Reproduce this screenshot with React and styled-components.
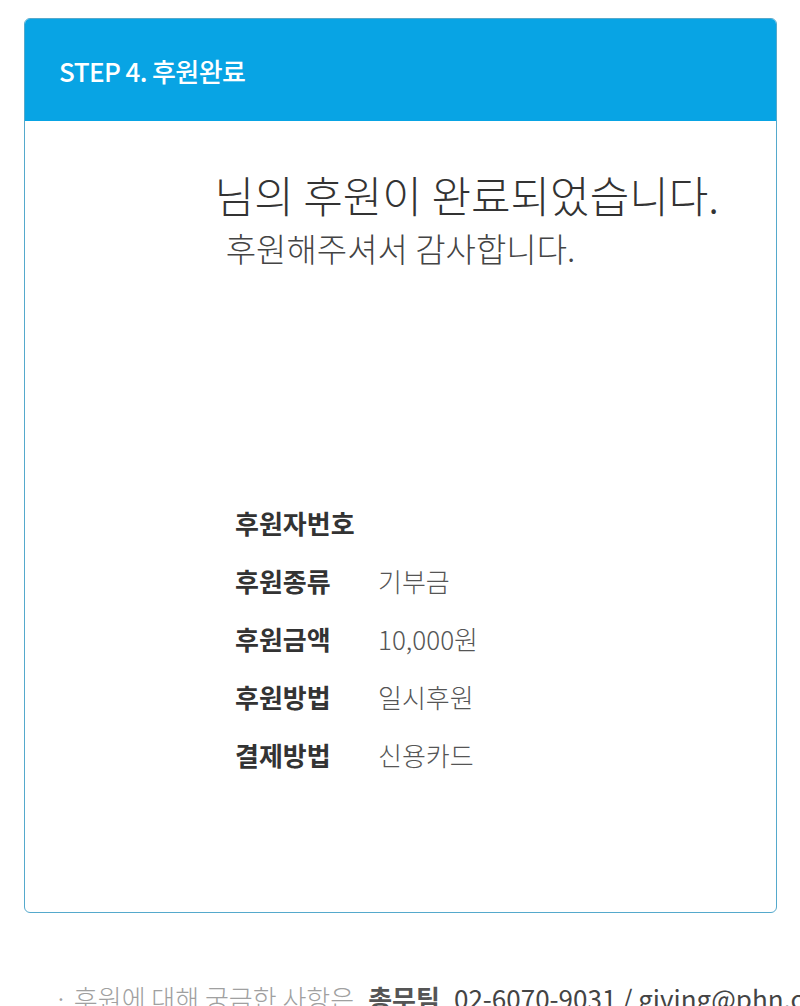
import styled, { createGlobalStyle } from 'styled-components'

const GlobalStyle = createGlobalStyle`
  html, body {
    margin: 0;
    padding: 0;
    background: #fff;
    font-family: "Noto Sans CJK KR", "Noto Sans", sans-serif;
  }
`

const Page = styled.div`
  width: 800px;
  height: 1006px;
  overflow: hidden;
  padding: 18px 23px 0 24px;
  box-sizing: border-box;
`

const Card = styled.section`
  height: 895px;
  box-sizing: border-box;
  border: 1.5px solid #55a9cc;
  border-radius: 6px;
  overflow: hidden;
  display: flex;
  flex-direction: column;
`

const CardHeader = styled.header`
  height: 102px;
  flex-shrink: 0;
  background: #08a4e4;
  display: flex;
  align-items: center;
  padding: 0 34px;
`

const Title = styled.h2`
  margin: 0;
  color: #fff;
  font-size: 26px;
  font-weight: 500;
  letter-spacing: -0.6px;
`

const Message = styled.div`
  padding-top: 45px;
  text-align: center;
  color: #333;
`

const MainLine = styled.p`
  margin: 0;
  font-size: 43px;
  line-height: 56px;
  font-weight: 300;
`

const Masked = styled.span`
  color: #fff;
  padding-right: 14px;
`

const SubLine = styled.p`
  margin: 4px 0 0;
  font-size: 33px;
  line-height: 44px;
  font-weight: 300;
  color: #444;
`

const InfoList = styled.dl`
  margin: 234px 0 0;
  padding-left: 210px;
  display: flex;
  flex-direction: column;
  gap: 22px;
`

const InfoRow = styled.div`
  display: flex;
  align-items: center;
  height: 36px;
`

const Label = styled.dt`
  width: 143px;
  font-size: 26px;
  font-weight: 700;
  color: #333;
`

const Value = styled.dd`
  margin: 0;
  font-size: 26px;
  font-weight: 300;
  color: #555;
`

const Footer = styled.p`
  margin: 68px 0 0 30px;
  white-space: nowrap;
  font-size: 26px;
  line-height: 34px;
  font-weight: 300;
  color: #a0a0a0;
`

const Strong = styled.b`
  color: #555;
  font-weight: 700;
  margin: 0 14px;
`

const Contact = styled.span`
  color: #444;
  font-weight: 400;
`

const rows = [
  { label: '후원자번호', value: '' },
  { label: '후원종류', value: '기부금' },
  { label: '후원금액', value: '10,000원' },
  { label: '후원방법', value: '일시후원' },
  { label: '결제방법', value: '신용카드' },
]

const App = () => {
  return (
    <>
      <GlobalStyle />
      <Page>
        <Card>
          <CardHeader>
            <Title>STEP 4. 후원완료</Title>
          </CardHeader>
          <Message>
            <MainLine>
              <Masked>홍길동</Masked>님의 후원이 완료되었습니다.
            </MainLine>
            <SubLine>후원해주셔서 감사합니다.</SubLine>
          </Message>
          <InfoList>
            {rows.map((row) => (
              <InfoRow key={row.label}>
                <Label>{row.label}</Label>
                <Value>{row.value}</Value>
              </InfoRow>
            ))}
          </InfoList>
        </Card>
        <Footer>
          · 후원에 대해 궁금한 사항은<Strong>총무팀</Strong>
          <Contact>02-6070-9031 / giving@phn.or.kr</Contact>
        </Footer>
      </Page>
    </>
  )
}

export default App
